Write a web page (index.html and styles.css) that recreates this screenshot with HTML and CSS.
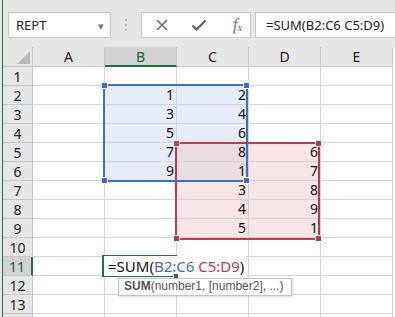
FILE: index.html
```html
<!DOCTYPE html>
<html lang="en">

<head>
    <meta charset="UTF-8">
    <meta name="viewport" content="width=device-width, initial-scale=1.0">
    <link rel="stylesheet" href="styles.css">
    <title>SUM intersect</title>
</head>

<body>
    <div class="window">
        <div class="edge"></div>
        <div class="main">
            <div class="toolbar">
                <div class="name-box">
                    <span>REPT</span>
                    <span class="drop">&#9662;</span>
                </div>
                <div class="grip"><i></i><i></i><i></i></div>
                <div class="fx-buttons">
                    <svg class="btn-icon" width="14" height="14" viewBox="0 0 14 14">
                        <path d="M2 2 L12 12 M12 2 L2 12" stroke="#6e6e6e" stroke-width="1.6" fill="none" />
                    </svg>
                    <svg class="btn-icon" width="16" height="14" viewBox="0 0 16 14">
                        <path d="M1.5 7.5 L5.5 11.5 L14.5 2.5" stroke="#5e5e5e" stroke-width="2.2" fill="none" />
                    </svg>
                    <span class="fx">f<sub>x</sub></span>
                </div>
                <div class="formula-box">=SUM(B2:C6 C5:D9)</div>
            </div>

            <div class="sheet">
                <div class="grid">
                    <div class="hd corner"><span class="tri"></span></div>
                    <div class="hd col">A</div>
                    <div class="hd col sel-col">B</div>
                    <div class="hd col">C</div>
                    <div class="hd col">D</div>
                    <div class="hd col">E</div>

                    <div class="hd row">1</div>
                    <div class="c"></div><div class="c"></div><div class="c"></div><div class="c"></div><div class="c"></div>

                    <div class="hd row">2</div>
                    <div class="c"></div><div class="c blue">1</div><div class="c blue">2</div><div class="c"></div><div class="c"></div>

                    <div class="hd row">3</div>
                    <div class="c"></div><div class="c blue">3</div><div class="c blue">4</div><div class="c"></div><div class="c"></div>

                    <div class="hd row">4</div>
                    <div class="c"></div><div class="c blue">5</div><div class="c blue">6</div><div class="c"></div><div class="c"></div>

                    <div class="hd row">5</div>
                    <div class="c"></div><div class="c blue">7</div><div class="c both">8</div><div class="c red">6</div><div class="c"></div>

                    <div class="hd row">6</div>
                    <div class="c"></div><div class="c blue">9</div><div class="c both">1</div><div class="c red">7</div><div class="c"></div>

                    <div class="hd row">7</div>
                    <div class="c"></div><div class="c"></div><div class="c red">3</div><div class="c red">8</div><div class="c"></div>

                    <div class="hd row">8</div>
                    <div class="c"></div><div class="c"></div><div class="c red">4</div><div class="c red">9</div><div class="c"></div>

                    <div class="hd row">9</div>
                    <div class="c"></div><div class="c"></div><div class="c red">5</div><div class="c red">1</div><div class="c"></div>

                    <div class="hd row">10</div>
                    <div class="c"></div><div class="c"></div><div class="c"></div><div class="c"></div><div class="c"></div>

                    <div class="hd row sel-row">11</div>
                    <div class="c"></div><div class="c"></div><div class="c"></div><div class="c"></div><div class="c"></div>

                    <div class="hd row">12</div>
                    <div class="c"></div><div class="c"></div><div class="c"></div><div class="c"></div><div class="c"></div>

                    <div class="hd row">13</div>
                    <div class="c"></div><div class="c"></div><div class="c"></div><div class="c"></div><div class="c"></div>

                    <!-- row 14 only peeks in at the bottom edge -->
                    <div class="hd row"></div>
                    <div class="c"></div><div class="c"></div><div class="c"></div><div class="c"></div><div class="c"></div>
                </div>

                <!-- range highlights drawn over the grid -->
                <div class="range range-blue">
                    <i class="h tl"></i><i class="h tr"></i><i class="h bl"></i><i class="h br"></i>
                </div>
                <div class="range range-red">
                    <i class="h tl"></i><i class="h tr"></i><i class="h bl"></i><i class="h br"></i>
                </div>

                <div class="editor">
                    <span class="edit-text">=SUM(<span class="ref-blue">B2:C6</span> <span class="ref-red">C5:D9</span>)</span>
                    <i class="fill-handle"></i>
                </div>
                <div class="tip"><b>SUM</b>(number1, [number2], ...)</div>
            </div>
        </div>
    </div>
</body>

</html>
```

FILE: styles.css
```css
* {
    box-sizing: border-box;
}

body {
    margin: 0;
    font-family: "Noto Sans", "Liberation Sans", sans-serif;
    background: #e6e6e6;
}

.window {
    display: flex;
    width: 395px;
    height: 317px;
    overflow: hidden;
}

.edge {
    width: 3px;
    flex: none;
    background: #e6e6e6;
    border-right: 1px solid #217346;
}

.main {
    flex: 1;
    display: flex;
    flex-direction: column;
    min-width: 0;
}

/* -------------------- TOOLBAR -------------------- */
.toolbar {
    height: 47px;
    flex: none;
    display: flex;
    align-items: flex-start;
    padding-top: 12px;
    padding-left: 5px;
    background: #e6e6e6;
}

.name-box,
.fx-buttons,
.formula-box {
    height: 26px;
    background: white;
    border: 1px solid #c6c6c6;
    display: flex;
    align-items: center;
}

.name-box {
    width: 103px;
    padding-left: 7px;
    padding-right: 6px;
    justify-content: space-between;
    font-size: 13px;
    color: #222;
}

.drop {
    font-size: 11px;
    color: #7a7a7a;
}

.grip {
    width: 30px;
    height: 26px;
    display: flex;
    flex-direction: column;
    align-items: center;
    justify-content: center;
    gap: 3px;
}

.grip i {
    width: 2px;
    height: 2px;
    background: #b5b5b5;
}

.fx-buttons {
    width: 110px;
    padding-left: 13px;
    gap: 22px;
}

.fx {
    font-family: "Liberation Serif", serif;
    font-style: italic;
    font-size: 16px;
    color: #6e6e6e;
    margin-left: 4px;
}

.fx sub {
    font-size: 11px;
    vertical-align: -1px;
}

.formula-box {
    flex: 1;
    margin-left: 4px;
    border-right: none;
    padding-left: 10px;
    font-size: 13px;
    color: #222;
}

/* -------------------- SHEET -------------------- */
.sheet {
    position: relative;
    flex: 1;
    background: white;
}

.grid {
    display: grid;
    grid-template-columns: 30px repeat(5, 72px);
    grid-template-rows: 20px;
    grid-auto-rows: 19px;
}

.hd {
    background: #e6e6e6;
    border-right: 1px solid #c6c6c6;
    border-bottom: 1px solid #c6c6c6;
    display: flex;
    align-items: center;
    justify-content: center;
    font-size: 14px;
    color: #222;
}

.corner {
    position: relative;
    background: #e6e6e6;
}

.tri {
    position: absolute;
    right: 2px;
    bottom: 2px;
    width: 0;
    height: 0;
    border-left: 13px solid transparent;
    border-bottom: 13px solid #b9b9b9;
}

.sel-col {
    background: #d2d2d2;
    color: #1d5e3b;
    border-bottom: 2px solid #217346;
}

.sel-row {
    background: #d2d2d2;
    color: #1d5e3b;
    border-right: 2px solid #217346;
}

.c {
    border-right: 1px solid #d4d4d4;
    border-bottom: 1px solid #d4d4d4;
    font-size: 14px;
    color: #111;
    text-align: right;
    padding-right: 2px;
    line-height: 18px;
}

.blue {
    background: #e6edf8;
}

.red {
    background: #f8e6e6;
}

.both {
    background: #e9dde4;
}

.range {
    position: absolute;
    width: 145px;
    height: 98px;
    border: 2px solid;
}

.range-blue {
    left: 100px;
    top: 37px;
    border-color: #3e6ec4;
    color: #3e6ec4;
}

.range-red {
    left: 172px;
    top: 95px;
    border-color: #c0394a;
    color: #c0394a;
}

.h {
    position: absolute;
    width: 7px;
    height: 7px;
    background: currentColor;
    border: 1px solid white;
}

.tl { left: -4px; top: -4px; }
.tr { right: -4px; top: -4px; }
.bl { left: -4px; bottom: -4px; }
.br { right: -4px; bottom: -4px; }

.editor {
    position: absolute;
    left: 99px;
    top: 208px;
    width: 75px;
    height: 22px;
    border: 2px solid #217346;
    white-space: nowrap;
}

.edit-text {
    position: absolute;
    left: 0;
    top: -1px;
    padding-left: 4px;
    padding-right: 2px;
    font-size: 15px;
    line-height: 20px;
    color: #111;
    background: white;
}

.ref-blue {
    color: #3e6ec4;
}

.ref-red {
    color: #c0394a;
}

.fill-handle {
    position: absolute;
    right: -4px;
    bottom: -4px;
    width: 6px;
    height: 6px;
    background: #217346;
    border: 1px solid white;
}

.tip {
    position: absolute;
    left: 115px;
    top: 231px;
    width: 174px;
    height: 18px;
    background: white;
    border: 1px solid #c2c2c2;
    box-shadow: 1px 1px 2px rgba(0, 0, 0, 0.15);
    font-family: "Liberation Sans", sans-serif;
    font-size: 12px;
    line-height: 15px;
    padding-left: 5px;
    color: #555;
    white-space: nowrap;
}

.tip b {
    color: #555;
}
```
